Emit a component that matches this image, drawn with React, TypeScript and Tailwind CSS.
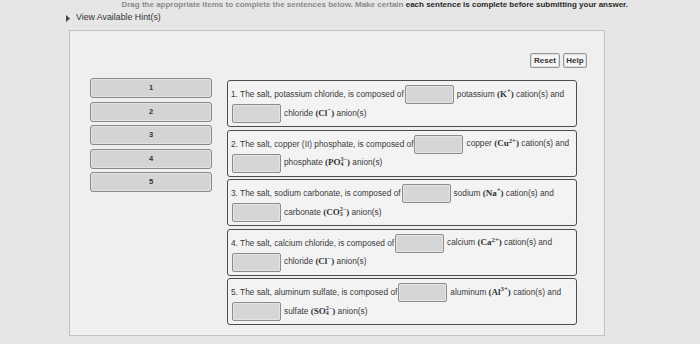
import React from "react";

const sans = { fontFamily: '"Liberation Sans", Arial, sans-serif' };
const serif = { fontFamily: '"Liberation Serif", "Times New Roman", serif' };

function F({ children }: { children: React.ReactNode }) {
  return (
    <span style={serif} className="font-bold text-[9px] text-[#333]">
      {children}
    </span>
  );
}

function Stack({ sub, sup }: { sub: string; sup: string }) {
  return (
    <span className="inline-flex flex-col items-start align-middle leading-[5px] text-[6px] -mt-[2px]">
      <span>{sup}</span>
      <span>{sub}</span>
    </span>
  );
}

function Input() {
  return (
    <div className="w-[49px] h-[19px] shrink-0 bg-[#d6d6d6] border border-[#8c8c8c] rounded-[2px] shadow-[inset_0_0_0_1px_#e4e4e4]" />
  );
}

type Item = {
  lead: string;
  cation: React.ReactNode;
  anion: React.ReactNode;
};

const items: Item[] = [
  {
    lead: "1. The salt, potassium chloride, is composed of",
    cation: (
      <>
        potassium <F>(K<sup>+</sup>)</F> cation(s) and
      </>
    ),
    anion: (
      <>
        chloride <F>(Cl<sup>−</sup>)</F> anion(s)
      </>
    ),
  },
  {
    lead: "2. The salt, copper (II) phosphate, is composed of",
    cation: (
      <>
        copper <F>(Cu<sup>2+</sup>)</F> cation(s) and
      </>
    ),
    anion: (
      <>
        phosphate{" "}
        <F>
          (PO<Stack sub="4" sup="3−" />)
        </F>{" "}
        anion(s)
      </>
    ),
  },
  {
    lead: "3. The salt, sodium carbonate, is composed of",
    cation: (
      <>
        sodium <F>(Na<sup>+</sup>)</F> cation(s) and
      </>
    ),
    anion: (
      <>
        carbonate{" "}
        <F>
          (CO<Stack sub="3" sup="2−" />)
        </F>{" "}
        anion(s)
      </>
    ),
  },
  {
    lead: "4. The salt, calcium chloride, is composed of",
    cation: (
      <>
        calcium <F>(Ca<sup>2+</sup>)</F> cation(s) and
      </>
    ),
    anion: (
      <>
        chloride <F>(Cl<sup>−</sup>)</F> anion(s)
      </>
    ),
  },
  {
    lead: "5. The salt, aluminum sulfate, is composed of",
    cation: (
      <>
        aluminum <F>(Al<sup>3+</sup>)</F> cation(s) and
      </>
    ),
    anion: (
      <>
        sulfate{" "}
        <F>
          (SO<Stack sub="4" sup="2−" />)
        </F>{" "}
        anion(s)
      </>
    ),
  },
];

export default function App() {
  return (
    <div
      style={sans}
      className="w-[700px] h-[344px] bg-[#e6e6e6] overflow-hidden text-[#333]"
    >
      {/* top instruction line, cut off */}
      <div className="flex justify-end pr-[72px] h-[9px] overflow-visible">
        <div className="text-[8px] leading-[9px] font-bold text-[#2a2a2a] whitespace-nowrap">
          <span className="text-[#8a8a8a]">Drag the appropriate items to complete the sentences below. Make certain </span>
          each sentence is complete before submitting your answer.
        </div>
      </div>

      {/* hint row */}
      <div className="flex items-center pl-[66px] mt-[3px] h-[12px] gap-[6px]">
        <svg width="4" height="7" viewBox="0 0 4 7">
          <path d="M0 0 L4 3.5 L0 7 Z" fill="#444" />
        </svg>
        <span className="text-[8.8px] text-[#333]">View Available Hint(s)</span>
      </div>

      {/* panel */}
      <div className="ml-[69px] mt-[6px] w-[536px] h-[306px] border border-[#c2c2c2] bg-[#efefef]">
        <div className="flex justify-end gap-[3px] pr-[17px] pt-[22px]">
          <div className="h-[15px] w-[30px] flex items-center justify-center border border-[#9a9a9a] bg-[#f6f6f6] rounded-[2px] shadow-[inset_0_0_0_1px_#dcdcdc] text-[8px] font-bold text-[#333]">
            Reset
          </div>
          <div className="h-[15px] w-[24px] flex items-center justify-center border border-[#9a9a9a] bg-[#f6f6f6] rounded-[2px] shadow-[inset_0_0_0_1px_#dcdcdc] text-[8px] font-bold text-[#333]">
            Help
          </div>
        </div>

        <div className="flex mt-[10px]">
          {/* tiles */}
          <div className="flex flex-col gap-[3.5px] ml-[20px] w-[122px]">
            {[1, 2, 3, 4, 5].map((n) => (
              <div
                key={n}
                className="h-[20px] flex items-center justify-center bg-[#d4d4d4] border border-[#8a8a8a] rounded-[3px] shadow-[inset_0_0_0_1px_#e2e2e2] text-[7.5px] font-bold text-[#333]"
              >
                {n}
              </div>
            ))}
          </div>

          {/* sentence boxes */}
          <div className="flex flex-col gap-[2.5px] ml-[15px] mt-[2px] w-[350px]">
            {items.map((it, i) => (
              <div
                key={i}
                className="h-[47px] border-[1.5px] border-[#4d4d4d] rounded-[3px] bg-[#f3f3f3] pl-[3px] pt-[4px] text-[8.3px] text-[#3a3a3a]"
              >
                <div className="flex items-center h-[19px] whitespace-nowrap">
                  <span>{it.lead}</span>
                  <div className="ml-[1px]">
                    <Input />
                  </div>
                  <span className="ml-[3px]">{it.cation}</span>
                </div>
                <div className="flex items-center h-[19px] whitespace-nowrap">
                  <div className="ml-[1px]">
                    <Input />
                  </div>
                  <span className="ml-[3px]">{it.anion}</span>
                </div>
              </div>
            ))}
          </div>
        </div>
      </div>
    </div>
  );
}
